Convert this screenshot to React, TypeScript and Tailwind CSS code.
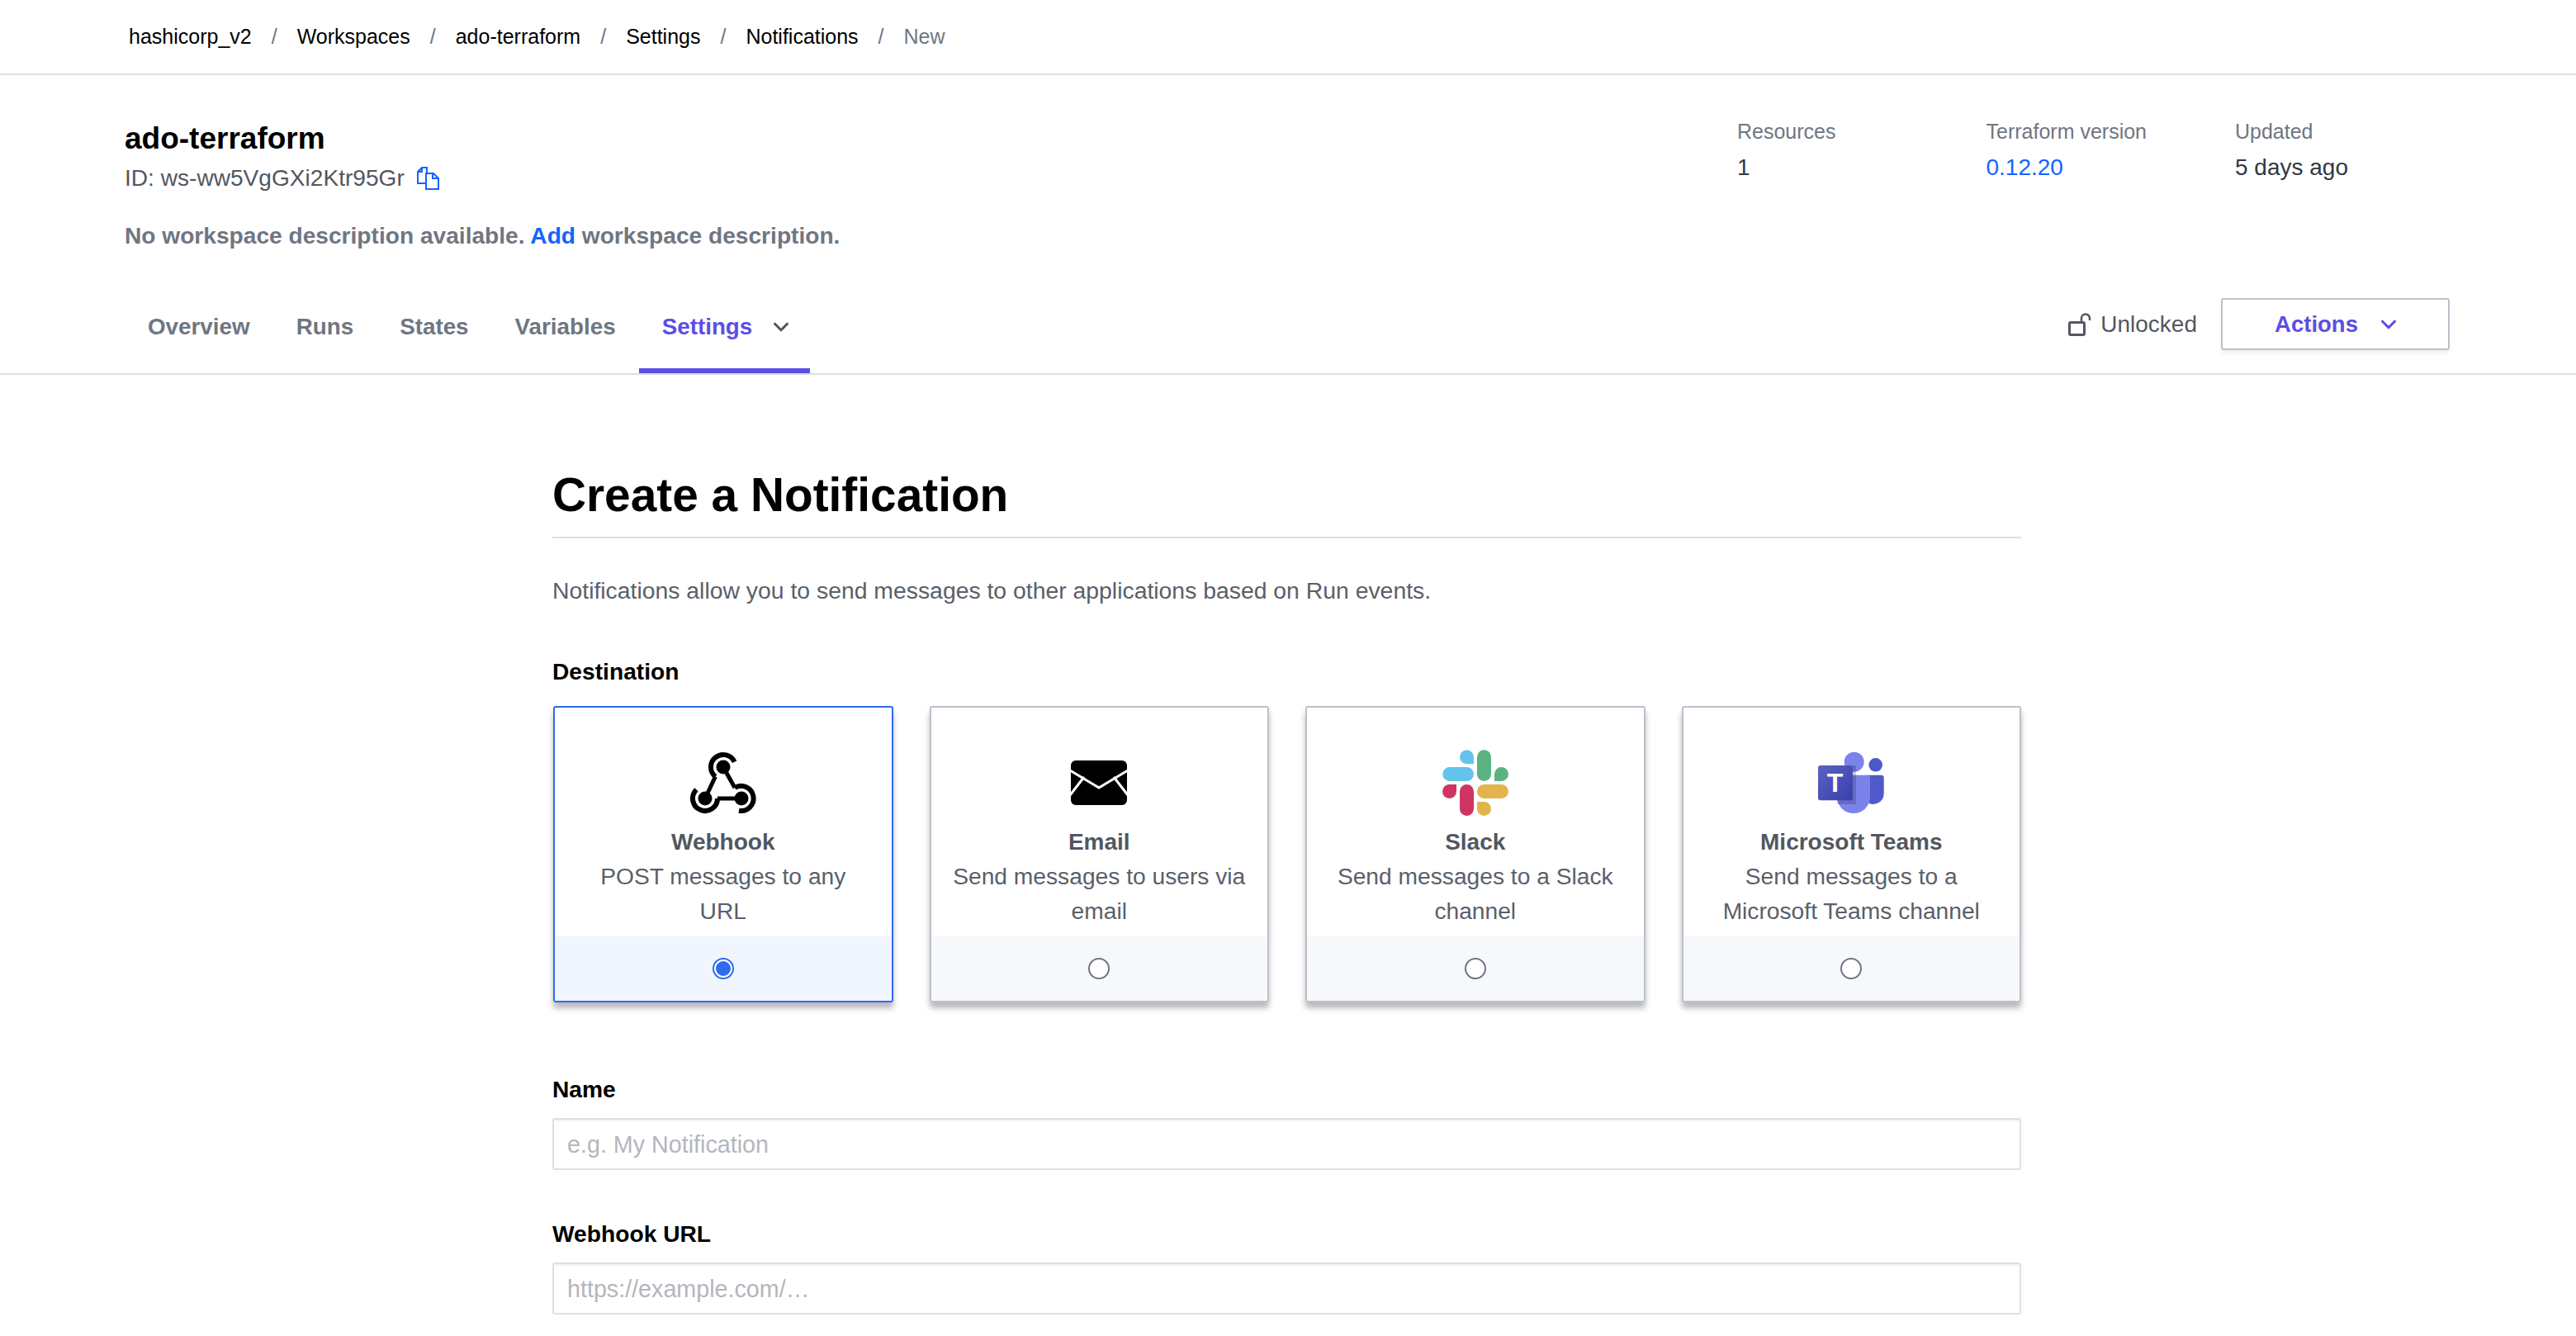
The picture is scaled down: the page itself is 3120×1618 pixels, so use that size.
import { ChevronDown } from "lucide-react";

const crumbs = ["hashicorp_v2", "Workspaces", "ado-terraform", "Settings", "Notifications"];
const tabs = ["Overview", "Runs", "States", "Variables"];

function WebhookIcon() {
  return (
    <svg width="80" height="80" viewBox="0 0 80 80" fill="none" stroke="#000">
      <g strokeWidth="6">
        <path d="M53.6 14.7A15 15 0 1 0 30.4 32.5" />
        <path d="M7.5 48.3A15 15 0 1 0 33 59" />
        <path d="M59 73.7A15 15 0 1 0 54 46" />
      </g>
      <g strokeWidth="5">
        <path d="M30.4 32.5L18 59" />
        <path d="M33 59H62" />
        <path d="M54 46L40 21" />
      </g>
      <g fill="#000" stroke="none">
        <circle cx="40" cy="21" r="8.5" />
        <circle cx="18" cy="59" r="8.5" />
        <circle cx="62" cy="59" r="8.5" />
      </g>
    </svg>
  );
}

function EmailIcon() {
  return (
    <svg width="80" height="80" viewBox="0 0 80 80" fill="none">
      <rect x="6" y="13" width="68" height="54" rx="6" fill="#000" />
      <path d="M5 25L40 46L75 25" stroke="#fff" strokeWidth="3" />
      <path d="M5 55L22 33M75 55L58 33" stroke="#fff" strokeWidth="3" />
    </svg>
  );
}

function SlackIcon() {
  return (
    <svg width="80" height="80" viewBox="0 0 80 80">
      <path d="M29.500 0.300a8.500 8.500 0 0 0 0 17H38V8.800a8.500 8.500 0 0 0-8.500-8.500z" fill="#64c3ec" />
      <rect x="0.300" y="21" width="37.700" height="17" rx="8.500" fill="#64c3ec" />
      <rect x="42" y="0.300" width="17" height="37.700" rx="8.500" fill="#5bb381" />
      <path d="M80 29.500a8.500 8.500 0 0 0-17 0V38h8.500a8.500 8.500 0 0 0 8.500-8.500z" fill="#5bb381" />
      <path d="M0 50.500a8.500 8.500 0 0 0 17 0V42H8.500A8.500 8.500 0 0 0 0 50.500z" fill="#cf3560" />
      <rect x="21" y="42" width="17" height="38" rx="8.500" fill="#cf3560" />
      <rect x="42" y="42" width="38" height="17" rx="8.500" fill="#e4b44c" />
      <path d="M50.500 80a8.500 8.500 0 0 0 0-17H42v8.500a8.500 8.500 0 0 0 8.500 8.500z" fill="#e4b44c" />
    </svg>
  );
}

function TeamsIcon() {
  return (
    <svg width="80" height="80" viewBox="0 0 80 80">
      <defs>
        <linearGradient id="teamsSquare" x1="0" y1="0" x2="1" y2="1">
          <stop offset="0" stopColor="#5a62c3" />
          <stop offset="1" stopColor="#3940ab" />
        </linearGradient>
      </defs>
      <circle cx="69.700" cy="18.300" r="8.300" fill="#4f58ca" />
      <path d="M58 30.700H76.500a3.200 3.200 0 0 1 3.200 3.200V53a12.700 12.700 0 0 1-21.700 9z" fill="#5059c9" />
      <circle cx="43.700" cy="14.700" r="12" fill="#7b83eb" />
      <path d="M23 30.700H60a3 3 0 0 1 3 3V57a20 20 0 0 1-40 0z" fill="#7b83eb" />
      <path d="M23 19H46V66H23z" fill="#000" opacity="0.18" />
      <rect x="0" y="19" width="42" height="42.300" rx="3" fill="url(#teamsSquare)" />
      <text x="20.500" y="51.300" textAnchor="middle" fontSize="32" fontWeight="700" fontFamily="'Liberation Sans', sans-serif" fill="#fff">
        T
      </text>
    </svg>
  );
}

function CopyIcon() {
  return (
    <svg width="28" height="28" viewBox="0 0 28 28" fill="none" stroke="#1563ff" strokeWidth="2" className="ml-[14px]">
      <path d="M15 20H2V6L7 1H13V8" />
      <path d="M7 1V6H2" />
      <path d="M12 8H21L27 14V27H12z" fill="#fff" />
      <path d="M20 8V14H27" />
    </svg>
  );
}

function LockIcon() {
  return (
    <svg width="28" height="28" viewBox="0 0 28 28" fill="none" stroke="#525761" strokeWidth="3">
      <rect x="1.500" y="11.500" width="18" height="15" rx="1.500" />
      <path d="M16 11V6.500a5 5 0 0 1 10 0V9" strokeWidth="2.500" />
    </svg>
  );
}

function Stat({ label, value, link }: { label: string; value: string; link?: boolean }) {
  return (
    <div>
      <div className="text-[25px] leading-[34px] text-[#6f7682]">{label}</div>
      <div className={`mt-[10px] text-[28px] leading-[34px] ${link ? "text-[#1563ff]" : "text-[#323843]"}`}>{value}</div>
    </div>
  );
}

function DestinationCard({
  icon,
  title,
  lines,
  selected,
}: {
  icon: React.ReactNode;
  title: string;
  lines: string[];
  selected?: boolean;
}) {
  return (
    <div
      className={`flex h-[359px] flex-col overflow-hidden rounded-[3px] border-2 shadow-[0_7px_7px_rgba(0,0,0,0.28)] ${
        selected ? "border-[#2f6af0]" : "border-[#bac1cc]"
      }`}
    >
      <div className="flex flex-1 flex-col items-center bg-white pt-[51px] text-center">
        {icon}
        <div className="mt-[12px] text-[28px] leading-[40px] font-bold text-[#525761]">{title}</div>
        {lines.map((line) => (
          <div key={line} className="mt-[1px] text-[28.200px] leading-[40.500px] whitespace-nowrap text-[#5a5f69]">
            {line}
          </div>
        ))}
      </div>
      <div className={`flex h-[78px] items-center justify-center ${selected ? "bg-[#f0f5fe]" : "bg-[#f7f8fa]"}`}>
        {selected ? (
          <span className="flex h-[26px] w-[26px] items-center justify-center rounded-full border-2 border-[#2f6af0] bg-white">
            <span className="h-[18px] w-[18px] rounded-full bg-[#2f6af0]" />
          </span>
        ) : (
          <span className="h-[26px] w-[26px] rounded-full border-2 border-[#6f7682] bg-white" />
        )}
      </div>
    </div>
  );
}

function Field({ label, placeholder }: { label: string; placeholder: string }) {
  return (
    <div>
      <label className="block text-[28.200px] leading-[40px] font-bold text-black">{label}</label>
      <input
        placeholder={placeholder}
        className="mt-[15px] block h-[63px] w-full rounded-[3px] border-2 border-[#dce0e6] bg-white px-[16px] pt-[1px] text-[28.700px] shadow-[inset_0_2px_1px_rgba(0,0,0,0.05)] outline-none placeholder:text-[#b3b6bd]"
      />
    </div>
  );
}

export default function App() {
  return (
    <div className="h-[1618px] overflow-hidden bg-white font-['Liberation_Sans',Arial,sans-serif]">
      <nav className="flex h-[91px] items-center border-b-2 border-[#dce0e6] pl-[156px] text-[25px]">
        {crumbs.map((crumb) => (
          <span key={crumb} className="flex items-center">
            <span className="text-black">{crumb}</span>
            <span className="mx-[24px] text-[#6f7682]">/</span>
          </span>
        ))}
        <span className="text-[#6f7682]">New</span>
      </nav>

      <header className="border-b-2 border-[#dce0e6] pr-[153px] pl-[151px]">
        <div className="flex">
          <div className="flex-1 pt-[55px]">
            <h1 className="text-[37px] leading-[44px] font-bold text-black">ado-terraform</h1>
            <div className="mt-[6px] flex h-[40px] items-center text-[28.100px] text-[#525761]">
              ID: ws-ww5VgGXi2Ktr95Gr
              <CopyIcon />
            </div>
            <p className="mt-[30px] text-[28.130px] leading-[40px] font-bold text-[#6f7682]">
              No workspace description available. <span className="text-[#1563ff]">Add</span> workspace description.
            </p>
          </div>
          <div className="grid w-[863px] grid-cols-[301.500px_301.500px_1fr] pt-[51px]">
            <Stat label="Resources" value="1" />
            <Stat label="Terraform version" value="0.12.20" link />
            <Stat label="Updated" value="5 days ago" />
          </div>
        </div>
        <div className="mt-[34px] flex h-[112px] items-stretch">
          {tabs.map((tab) => (
            <a key={tab} className="flex items-center px-[28px] text-[27.800px] font-bold text-[#6f7682]">
              {tab}
            </a>
          ))}
          <a className="flex items-center gap-[20px] border-b-[6px] border-[#5c4ee5] pt-[6px] pr-[20px] pl-[28px] text-[27.800px] font-bold text-[#5c4ee5]">
            Settings
            <ChevronDown size={30} strokeWidth={2.500} className="text-[#525761]" />
          </a>
          <div className="ml-auto flex items-center pb-[7px]">
            <LockIcon />
            <span className="ml-[11px] text-[28px] text-[#525761]">Unlocked</span>
            <button className="ml-[29px] flex h-[63px] w-[277px] items-center justify-center gap-[22px] rounded-[3px] border-2 border-[#bac1cc] bg-white pl-[6px] text-[27.500px] font-bold text-[#5c4ee5] shadow-[0_4px_4px_rgba(0,0,0,0.06)]">
              Actions
              <ChevronDown size={30} strokeWidth={2.500} />
            </button>
          </div>
        </div>
      </header>

      <main className="ml-[669px] w-[1779px] pt-[111px]">
        <h2 className="border-b-2 border-[#dce0e6] pb-[15px] text-[56.800px] leading-[70px] font-bold text-black">
          Create a Notification
        </h2>
        <p className="mt-[43px] text-[28.370px] leading-[40px] text-[#5a5f69]">
          Notifications allow you to send messages to other applications based on Run events.
        </p>
        <div className="mt-[58px] text-[28.200px] leading-[40px] font-bold text-black">Destination</div>
        <div className="mt-[22px] ml-[1px] grid grid-cols-4 gap-[44px]">
          <DestinationCard icon={<WebhookIcon />} title="Webhook" lines={["POST messages to any", "URL"]} selected />
          <DestinationCard icon={<EmailIcon />} title="Email" lines={["Send messages to users via", "email"]} />
          <DestinationCard icon={<SlackIcon />} title="Slack" lines={["Send messages to a Slack", "channel"]} />
          <DestinationCard icon={<TeamsIcon />} title="Microsoft Teams" lines={["Send messages to a", "Microsoft Teams channel"]} />
        </div>
        <div className="mt-[85px]">
          <Field label="Name" placeholder="e.g. My Notification" />
        </div>
        <div className="mt-[57px]">
          <Field label="Webhook URL" placeholder="https://example.com/…" />
        </div>
      </main>
    </div>
  );
}
